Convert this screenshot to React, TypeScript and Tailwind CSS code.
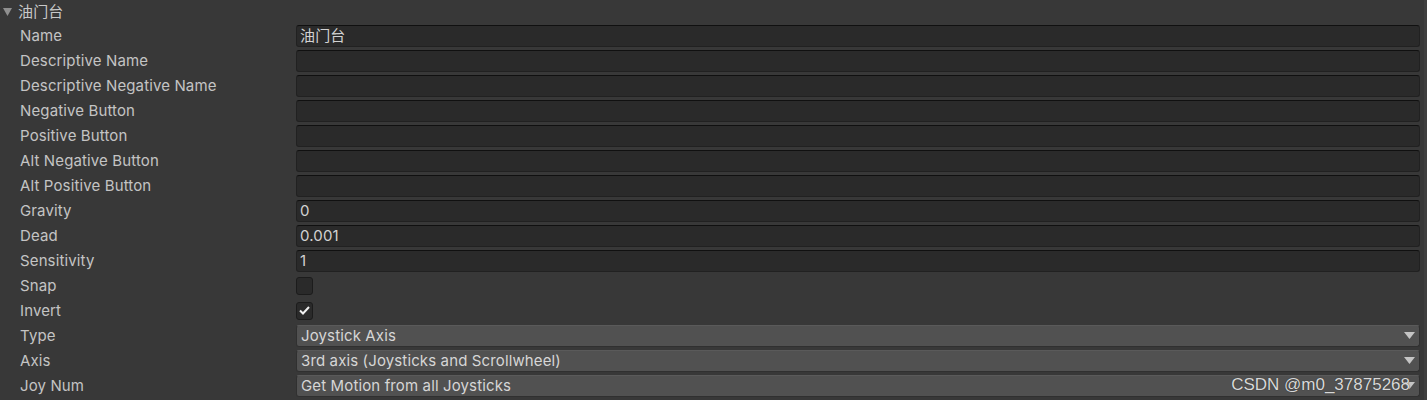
import React from "react";

const textRows: { label: string; value?: string }[] = [
  { label: "Name", value: "油门台" },
  { label: "Descriptive Name" },
  { label: "Descriptive Negative Name" },
  { label: "Negative Button" },
  { label: "Positive Button" },
  { label: "Alt Negative Button" },
  { label: "Alt Positive Button" },
  { label: "Gravity", value: "0" },
  { label: "Dead", value: "0.001" },
  { label: "Sensitivity", value: "1" },
];

const dropRows = [
  { label: "Type", value: "Joystick Axis" },
  { label: "Axis", value: "3rd axis (Joysticks and Scrollwheel)" },
  { label: "Joy Num", value: "Get Motion from all Joysticks" },
];

function Row({ label, children }: { label: string; children: React.ReactNode }) {
  return (
    <div className="grid grid-cols-[296px_1fr] h-[25px] items-center">
      <div className="pl-[20px] text-[#c4c4c4] leading-none whitespace-nowrap">{label}</div>
      <div className="flex items-center">{children}</div>
    </div>
  );
}

function Arrow() {
  return (
    <svg width="11" height="7" viewBox="0 0 11 7" className="shrink-0">
      <path d="M0 0 H11 L5.5 7 Z" fill="#c4c4c4" />
    </svg>
  );
}

export default function App() {
  return (
    <div
      className="relative w-full h-[400px] bg-[#383838] flex overflow-hidden text-[15px] tracking-[0.13px]"
      style={{ fontFamily: 'Inter, "Noto Sans CJK SC", sans-serif' }}
    >
      <div className="flex-1 flex flex-col pr-[4px]">
        <div className="h-[23px] flex items-center">
          <svg width="9" height="8" viewBox="0 0 9 8" className="ml-[3px] mr-[6px]">
            <path d="M0 0 H9 L4.5 8 Z" fill="#8f8f8f" />
          </svg>
          <span className="text-[#c8c8c8] leading-none">油门台</span>
        </div>
        {textRows.map((r) => (
          <Row key={r.label} label={r.label}>
            <div className="w-full h-[22px] rounded-[3px] bg-[#2a2a2a] border border-[#212121] border-t-[#101010] flex items-center pl-[3px] text-[#d2d2d2] leading-none">
              {r.value ?? ""}
            </div>
          </Row>
        ))}
        <Row label="Snap">
          <div className="w-[17px] h-[18px] rounded-[3px] bg-[#2a2a2a] border border-[#1c1c1c]" />
        </Row>
        <Row label="Invert">
          <div className="w-[17px] h-[18px] rounded-[3px] bg-[#2a2a2a] border border-[#1c1c1c] flex items-center justify-center">
            <svg width="11" height="9" viewBox="0 0 11 9">
              <path d="M1 4.5 L4 7.5 L10 1" stroke="#f0f0f0" strokeWidth="2" fill="none" />
            </svg>
          </div>
        </Row>
        {dropRows.map((r) => (
          <Row key={r.label} label={r.label}>
            <div className="w-full h-[22px] rounded-[3px] bg-[#515151] border border-[#303030] border-t-[#5a5a5a] flex items-center pl-[4px] pr-[4px] text-[#d6d6d6] leading-none">
              <span className="flex-1 whitespace-nowrap">{r.value}</span>
              <Arrow />
            </div>
          </Row>
        ))}
      </div>
      <div className="w-[3px] bg-[#3f3f3f]" />
      <div
        className="absolute right-[17px] bottom-[7px] text-[17px] text-[#d8d8d8] leading-none pointer-events-none tracking-normal"
        style={{ fontFamily: '"Liberation Sans", Arial, sans-serif', textShadow: "0 0 1px #222" }}
      >
        CSDN @m0_37875268
      </div>
    </div>
  );
}
